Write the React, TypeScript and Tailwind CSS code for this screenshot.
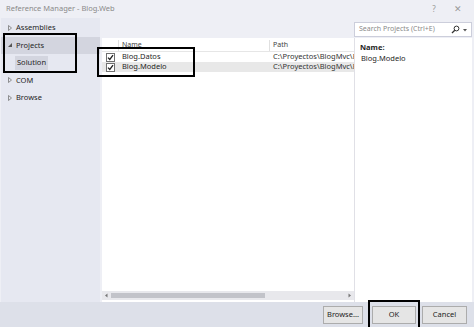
import React from 'react';

const navItems = [
  { label: 'Assemblies', open: false },
  { label: 'Projects', open: true, selected: true },
  { label: 'Solution', child: true },
  { label: 'COM', open: false },
  { label: 'Browse', open: false },
];

const rows = [
  { name: 'Blog.Datos', path: 'C:\\Proyectos\\BlogMvc\\BlogMvc\\Blog.Datos', selected: false },
  { name: 'Blog.Modelo', path: 'C:\\Proyectos\\BlogMvc\\BlogMvc\\Blog.Modelo', selected: true },
];

const Arrow = ({ open }: { open?: boolean }) =>
  open ? (
    <svg width="6" height="6" viewBox="0 0 6 6" className="shrink-0">
      <path d="M5 1 L5 5 L1 5 Z" fill="#555" />
    </svg>
  ) : (
    <svg width="6" height="6" viewBox="0 0 6 6" className="shrink-0">
      <path d="M1.5 0.5 L4.5 3 L1.5 5.5 Z" fill="none" stroke="#777" strokeWidth="0.8" />
    </svg>
  );

const Check = () => (
  <div className="w-[9px] h-[9px] border border-[#707070] bg-white flex items-center justify-center">
    <svg width="7" height="7" viewBox="0 0 7 7">
      <path d="M1 3.6 L2.8 5.4 L6 1.2" fill="none" stroke="#222" strokeWidth="1.3" />
    </svg>
  </div>
);

const Btn = ({ label, w }: { label: string; w: string }) => (
  <button className={`h-[18px] ${w} bg-[#e5e5e5] border border-[#acacac] text-[7.5px] text-[#222]`}>{label}</button>
);

export default function App() {
  return (
    <div
      className="relative w-[474px] h-[327px] bg-[#eeeff5] flex flex-col overflow-hidden text-[#1e1e1e]"
      style={{ fontFamily: '"Noto Sans", "Open Sans", sans-serif' }}
    >
      {/* Title bar */}
      <div className="h-[18px] flex items-center pl-[6px] shrink-0">
        <span className="text-[7.5px] text-[#8a8a8a] flex-1">Reference Manager - Blog.Web</span>
        <span className="text-[8px] text-[#999] w-[28px] text-center">?</span>
        <span className="text-[9px] text-[#999] w-[20px] mr-[6px] text-center">✕</span>
      </div>

      <div className="flex flex-1 min-h-0">
        {/* Left nav */}
        <div className="w-[99px] ml-[1px] shrink-0 bg-[#e6e8f1] flex flex-col pt-[1px] text-[7.5px]">
          {navItems.map((it) => (
            <div
              key={it.label}
              className={`h-[17.5px] flex items-center ${it.selected ? 'bg-[#d3d5df]' : ''} ${it.child ? 'pl-[14px]' : 'pl-[6px] gap-[3px]'}`}
            >
              {it.child ? (
                <span className="bg-[#d3d5df] h-[14px] px-[2px] flex items-center">{it.label}</span>
              ) : (
                <>
                  <Arrow open={it.open} />
                  <span>{it.label}</span>
                </>
              )}
            </div>
          ))}
        </div>

        {/* Main */}
        <div className="flex-1 min-w-0 flex flex-col pl-[2px] pr-[2px]">
          <div className="h-[20px] flex justify-end items-start pt-[4px] shrink-0">
            <div className="w-[118px] h-[15px] bg-white border border-[#cccedb] flex items-center pl-[4px] pr-[3px] text-[7px] text-[#8a8a8a]">
              <span className="flex-1 whitespace-nowrap">Search Projects (Ctrl+E)</span>
              <svg width="9" height="9" viewBox="0 0 9 9" className="shrink-0">
                <circle cx="5.5" cy="3.5" r="2.4" fill="none" stroke="#333" strokeWidth="1" />
                <path d="M3.8 5.2 L1 8" stroke="#333" strokeWidth="1.3" />
              </svg>
              <svg width="6" height="6" viewBox="0 0 6 6" className="ml-[2px] shrink-0">
                <path d="M1 2 L5 2 L3 4.5 Z" fill="#555" />
              </svg>
            </div>
          </div>

          <div className="flex flex-1 min-h-0">
            {/* List */}
            <div className="flex-1 min-w-0 bg-white flex flex-col overflow-hidden">
              <div className="h-[12px] mt-[2px] flex text-[7px] text-[#444] border-b border-[#e6e6e6] shrink-0">
                <div className="w-[17px] shrink-0 border-r border-[#e0e0e0]" />
                <div className="w-[151px] shrink-0 border-r border-[#e0e0e0] pl-[3px] flex items-center">Name</div>
                <div className="flex-1 pl-[3px] flex items-center whitespace-nowrap">Path</div>
              </div>
              {rows.map((r) => (
                <div key={r.name} className={`h-[10px] flex items-center text-[7.5px] shrink-0 ${r.selected ? 'bg-[#e8e8e8]' : ''}`}>
                  <div className="w-[17px] shrink-0 flex justify-center">
                    <Check />
                  </div>
                  <div className="w-[151px] shrink-0 pl-[3px] whitespace-nowrap">{r.name}</div>
                  <div className="flex-1 min-w-0 pl-[3px] whitespace-nowrap overflow-hidden text-[#333]">{r.path}</div>
                </div>
              ))}
              <div className="flex-1" />
              {/* Horizontal scrollbar */}
              <div className="h-[9px] mb-[2px] bg-[#e8e8ec] flex items-center shrink-0">
                <svg width="9" height="9" viewBox="0 0 9 9" className="shrink-0">
                  <path d="M5.5 2.5 L3 4.5 L5.5 6.5 Z" fill="#777" />
                </svg>
                <div className="w-[154px] h-[5px] bg-[#c2c3c9]" />
                <div className="flex-1" />
                <svg width="9" height="9" viewBox="0 0 9 9" className="shrink-0">
                  <path d="M3.5 2.5 L6 4.5 L3.5 6.5 Z" fill="#777" />
                </svg>
              </div>
            </div>
            {/* Details */}
            <div className="w-[118px] shrink-0 bg-white border-l border-[#e0e0e6] pl-[5px] pt-[4px] text-[7.5px]">
              <div className="font-bold leading-[11px]">Name:</div>
              <div className="leading-[11px] pl-[1px]">Blog.Modelo</div>
            </div>
          </div>
        </div>
      </div>

      {/* Bottom bar */}
      <div className="h-[25px] bg-[#dde0e9] flex items-center justify-end pr-[7px] shrink-0">
        <Btn label="Browse..." w="w-[40px]" />
        <div className="w-[9px]" />
        <Btn label="OK" w="w-[44px]" />
        <div className="w-[6px]" />
        <Btn label="Cancel" w="w-[45px]" />
      </div>

      {/* Annotation boxes */}
      <div className="absolute left-[3px] top-[33px] w-[74px] h-[40px] border-2 border-black pointer-events-none" />
      <div className="absolute left-[97px] top-[47px] w-[98px] h-[30px] border-2 border-black pointer-events-none" />
      <div className="absolute left-[368px] top-[300px] w-[52px] h-[30px] border-2 border-black pointer-events-none" />
    </div>
  );
}
